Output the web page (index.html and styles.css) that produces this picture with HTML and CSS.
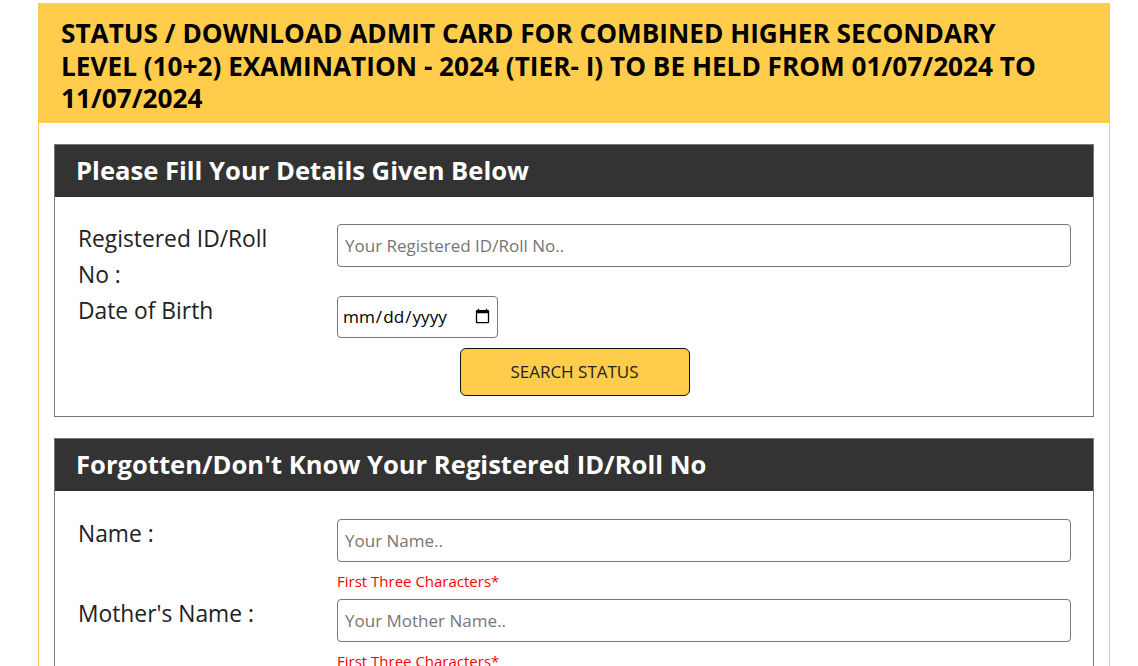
FILE: index.html
```html
<!DOCTYPE html>
<html>

<head>
    <meta charset="utf-8" />
    <title>Admit Card Status</title>
    <meta name="viewport" content="width=device-width, initial-scale=1">
    <link rel="stylesheet" href="styles.css">
</head>

<body>
    <div class="wrap">
        <div class="top">
            <h1>STATUS / DOWNLOAD ADMIT CARD FOR COMBINED HIGHER SECONDARY LEVEL (10+2) EXAMINATION - 2024 (TIER- I) TO BE HELD FROM 01/07/2024 TO 11/07/2024</h1>
        </div>

        <div class="panel">
            <h2 class="panel-head">Please Fill Your Details Given Below</h2>
            <form class="panel-body" onsubmit="event.preventDefault()">
                <div class="row">
                    <label for="regid">Registered ID/Roll No :</label>
                    <div class="field">
                        <input type="text" id="regid" class="txt" placeholder="Your Registered ID/Roll No..">
                    </div>
                </div>
                <div class="row">
                    <label for="dob">Date of Birth</label>
                    <div class="field">
                        <input type="date" id="dob" class="date">
                    </div>
                </div>
                <div class="btn-row">
                    <button type="submit" class="btn">SEARCH STATUS</button>
                </div>
            </form>
        </div>

        <div class="panel">
            <h2 class="panel-head">Forgotten/Don't Know Your Registered ID/Roll No</h2>
            <form class="panel-body" onsubmit="event.preventDefault()">
                <div class="row">
                    <label for="name">Name :</label>
                    <div class="field">
                        <input type="text" id="name" class="txt" placeholder="Your Name..">
                        <div class="hint">First Three Characters*</div>
                    </div>
                </div>
                <div class="row">
                    <label for="mname">Mother's Name :</label>
                    <div class="field">
                        <input type="text" id="mname" class="txt" placeholder="Your Mother Name..">
                        <div class="hint">First Three Characters*</div>
                    </div>
                </div>
            </form>
        </div>
    </div>
</body>

</html>
```

FILE: styles.css
```css
body {
    margin: 0;
    font-family: "Open Sans", "Noto Sans", sans-serif;
    color: #222;
    background-color: #fff;
}

.wrap {
    width: 1072px;
    box-sizing: border-box;
    margin: 3px 0 0 38px;
    border: solid 1px #f9c85a;
    border-top: none;
    padding-bottom: 20px;
}

.top {
    background-color: #ffcc4b;
    padding: 14px 35px 8px 22px;
}

.top h1 {
    margin: 0;
    font-size: 26.2px;
    line-height: 32.5px;
    font-weight: bold;
    color: #000;
}

.panel {
    margin: 21px 15px 0 15px;
    border: solid 1px #777;
}

.panel-head {
    margin: 0;
    background-color: #333;
    color: #fff;
    font-size: 25.6px;
    font-weight: bold;
    height: 52px;
    line-height: 52px;
    padding-left: 21px;
}

.panel-body {
    padding: 24px 22px 20px 23px;
}

.panel + .panel .panel-body {
    padding-top: 25px;
}

.row {
    display: grid;
    grid-template-columns: 215px 1fr;
    column-gap: 44px;
}

.row label {
    font-size: 22.8px;
    line-height: 36px;
}

.field {
    padding-top: 3px;
    padding-bottom: 4px;
}

.txt {
    display: block;
    width: 100%;
    box-sizing: border-box;
    height: 43px;
    border: solid 1px #767676;
    border-radius: 4px;
    padding: 0 7px;
    font-family: inherit;
    font-size: 17px;
    color: #222;
}

.txt::placeholder {
    color: #767676;
}

.date {
    box-sizing: border-box;
    width: 161px;
    height: 42px;
    border: solid 1px #767676;
    border-radius: 4px;
    padding: 0 4px;
    font-family: inherit;
    font-size: 17.2px;
    color: #000;
}

.hint {
    color: #ff0000;
    font-size: 15px;
    line-height: 22px;
    margin-top: 8px;
}

.btn-row {
    text-align: center;
    margin-top: 6px;
}

.btn {
    width: 230px;
    height: 48px;
    background-color: #ffcc4b;
    border: solid 1px #111;
    border-radius: 6px;
    font-family: inherit;
    font-size: 17px;
    color: #222;
    cursor: pointer;
}
```
